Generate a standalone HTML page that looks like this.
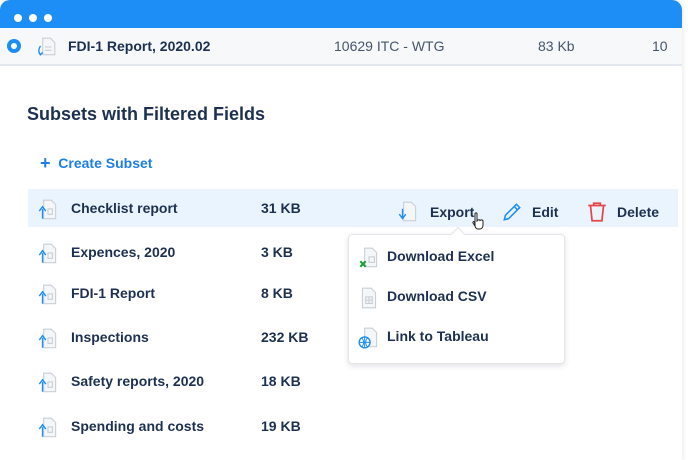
<!DOCTYPE html>
<html><head><meta charset="utf-8"><style>
*{box-sizing:border-box;margin:0;padding:0}
body{width:688px;height:448px;background:#fff;font-family:"Liberation Sans",sans-serif;color:#1d3050;position:relative;overflow:hidden}
.win{position:absolute;left:0;top:0;width:682px;height:460px;background:#fff;border-radius:10px 10px 0 0;box-shadow:0 0 6px rgba(0,0,0,.12)}
.hdr{position:absolute;left:0;top:0;width:682px;height:28px;background:#1e8ef7;border-radius:10px 10px 0 0}
.dot{position:absolute;top:14px;width:8px;height:8px;border-radius:50%;background:#fff}
.bar{position:absolute;left:0;top:28px;width:682px;height:38px;background:#f6f8fa;border-bottom:2px solid #e3e8ee;font-size:14px}
.t{position:absolute;white-space:nowrap}
.b{font-weight:bold}
.row{position:absolute;left:28px;width:650px;height:38px}
.menu{position:absolute;left:348px;top:234px;width:217px;height:130px;background:#fff;border:1px solid #e2e6ea;border-radius:4px;box-shadow:0 2px 6px rgba(0,0,0,.12)}
.menu .t{font-size:14px;font-weight:bold;left:38px}
</style></head><body>
<div class="win">
<div class="hdr"><div class="dot" style="left:14px"></div><div class="dot" style="left:29px"></div><div class="dot" style="left:44px"></div></div>
<div class="bar">
<div style="position:absolute;left:7px;top:11px;width:14px;height:14px;border-radius:50%;background:#1e8ef7"><div style="position:absolute;left:4px;top:4px;width:6px;height:6px;border-radius:50%;background:#fff"></div></div>
<svg style="position:absolute;left:35px;top:8px" width="22" height="22" viewBox="0 0 20 20"><path d="M7 2h7l4 4v11H7z" fill="#f4f6f8" stroke="#c8cfd6"/><path d="M9 10h6M9 13h6" stroke="#c8cfd6"/><path d="M5 9c-2 3-2 6 0 8l2-2" fill="none" stroke="#1e8ef7" stroke-width="1.3"/></svg>
<div class="t b" style="left:68px;top:10px">FDI-1 Report, 2020.02</div>
<div class="t" style="left:334px;top:10px;color:#46566b">10629 ITC - WTG</div>
<div class="t" style="left:538px;top:10px;color:#46566b">83 Kb</div>
<div class="t" style="left:652px;top:10px;color:#46566b">10</div>
</div>
<div class="t b" style="left:27px;top:104px;font-size:18px">Subsets with Filtered Fields</div>
<div class="t b" style="left:40px;top:152px;font-size:14px;color:#1e7ee6"><span style="font-size:18px;position:relative;top:1px">+</span>&nbsp;&nbsp;Create Subset</div>

<div class="row" style="top:189px;background:#eaf4fe"></div>
<div id="rows"></div>

<div class="menu">
<div style="position:absolute;left:104px;top:-6px;width:10px;height:10px;background:#fff;border-left:1px solid #e2e6ea;border-top:1px solid #e2e6ea;transform:rotate(45deg)"></div>
<svg style="position:absolute;left:9px;top:11px" width="22" height="24" viewBox="0 0 20 22"><path d="M6 2h7l4 4v13H6z" fill="#f4f6f8" stroke="#c8cfd6"/><rect x="10" y="10" width="5" height="5" fill="none" stroke="#c8cfd6"/><path d="M2 14l5 5M7 14l-5 5" stroke="#23a03a" stroke-width="2"/></svg>
<div class="t" style="top:13px">Download Excel</div>
<svg style="position:absolute;left:9px;top:51px" width="22" height="24" viewBox="0 0 20 22"><path d="M4 2h8l4 4v14H4z" fill="#f4f6f8" stroke="#c8cfd6"/><rect x="7" y="10" width="6" height="6" fill="none" stroke="#c8cfd6"/><path d="M10 10v6M7 13h6" stroke="#c8cfd6"/></svg>
<div class="t" style="top:53px">Download CSV</div>
<svg style="position:absolute;left:9px;top:91px" width="22" height="24" viewBox="0 0 20 22"><path d="M6 2h7l4 4v13H6z" fill="#f4f6f8" stroke="#c8cfd6"/><circle cx="6" cy="15" r="5" fill="#fff" stroke="#1e8ef7" stroke-width="1.3"/><path d="M1 15h10M6 10v10M3.5 11c2 2 2 6 0 8M8.5 11c-2 2-2 6 0 8" fill="none" stroke="#1e8ef7" stroke-width=".9"/></svg>
<div class="t" style="top:93px">Link to Tableau</div>
</div>

<svg style="position:absolute;left:397px;top:200px" width="22" height="24" viewBox="0 0 20 22"><path d="M6 2h7l4 4v13H6z" fill="#f4f6f8" stroke="#c8cfd6"/><path d="M5 8v8M2 13l3 4 3-4" fill="none" stroke="#1e8ef7" stroke-width="1.3"/></svg>
<div class="t b" style="left:430px;top:204px;font-size:14px">Export</div>
<svg style="position:absolute;left:470px;top:210px" width="16" height="22" viewBox="0 0 16 22"><path d="M5 16V4c0-1.5 2-1.5 2 0v7l1-1c1-.5 2 0 2 .5l1-.5c1-.3 2 .3 2 1v4c0 2-1 4-3 4H8c-1.5 0-2.5-1-3-3l-2-3c-.5-1 .5-2 1.5-1z" fill="#fff" stroke="#222" stroke-width="1"/></svg>
<svg style="position:absolute;left:501px;top:201px" width="22" height="22" viewBox="0 0 20 20"><path d="M3 17l1-4L14 3l3 3L7 16z M12 5l3 3" fill="none" stroke="#1e8ef7" stroke-width="1.4"/></svg>
<div class="t b" style="left:532px;top:204px;font-size:14px">Edit</div>
<svg style="position:absolute;left:586px;top:200px" width="22" height="24" viewBox="0 0 20 22"><path d="M2 5h16M7 5V3h6v2M4 5l1.5 14h9L16 5" fill="none" stroke="#e5454a" stroke-width="1.6"/></svg>
<div class="t b" style="left:617px;top:204px;font-size:14px">Delete</div>
</div>
<script>
var d=[["Checklist report","31 KB",200],["Expences, 2020","3 KB",244],["FDI-1 Report","8 KB",285],["Inspections","232 KB",329],["Safety reports, 2020","18 KB",373],["Spending and costs","19 KB",418]];
var h="";d.forEach(function(r){h+='<svg style="position:absolute;left:37px;top:'+(r[2]-2)+'px" width="22" height="24" viewBox="0 0 20 22"><path d="M6 2h7l4 4v13H6z" fill="#f4f6f8" stroke="#c8cfd6"/><rect x="10" y="10" width="4" height="5" fill="none" stroke="#c8cfd6"/><path d="M5 19V10M2 12l3-4 3 4" fill="none" stroke="#1e8ef7" stroke-width="1.3"/></svg><div class="t b" style="left:71px;top:'+r[2]+'px;font-size:14px">'+r[0]+'</div><div class="t b" style="left:261px;top:'+r[2]+'px;font-size:14px">'+r[1]+'</div>';});
document.getElementById("rows").innerHTML=h;
</script>
</body></html>
